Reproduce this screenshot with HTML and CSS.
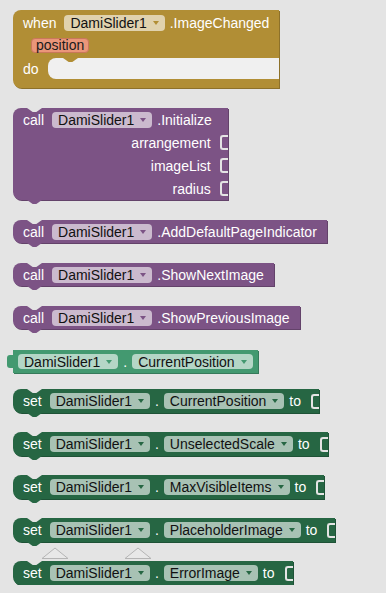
FILE: index.html
```html
<!DOCTYPE html>
<html lang="en">

<head>
  <meta charset="UTF-8">
  <title>DamiSlider blocks</title>
  <link rel="stylesheet" href="styles.css">
</head>

<body>
  <div class="workspace">

    <div class="block event">
      <div class="row top-row">
        <span class="label">when</span>
        <span class="chip">DamiSlider1<i class="arrow"></i></span>
        <span class="label">.ImageChanged</span>
      </div>
      <div class="row param-row">
        <span class="param">position</span>
      </div>
      <div class="row do-row">
        <span class="label do">do</span>
        <span class="slot"></span>
      </div>
    </div>

    <div class="block method stmt init">
      <div class="row head">
        <span class="label">call</span>
        <span class="chip">DamiSlider1<i class="arrow"></i></span>
        <span class="label">.Initialize</span>
      </div>
      <div class="row arg">
        <span class="label">arrangement</span>
        <span class="socket"></span>
      </div>
      <div class="row arg">
        <span class="label">imageList</span>
        <span class="socket"></span>
      </div>
      <div class="row arg">
        <span class="label">radius</span>
        <span class="socket"></span>
      </div>
    </div>

    <div class="block method stmt line">
      <span class="label">call</span>
      <span class="chip">DamiSlider1<i class="arrow"></i></span>
      <span class="label">.AddDefaultPageIndicator</span>
    </div>

    <div class="block method stmt line">
      <span class="label">call</span>
      <span class="chip">DamiSlider1<i class="arrow"></i></span>
      <span class="label">.ShowNextImage</span>
    </div>

    <div class="block method stmt line">
      <span class="label">call</span>
      <span class="chip">DamiSlider1<i class="arrow"></i></span>
      <span class="label">.ShowPreviousImage</span>
    </div>

    <div class="block getter line">
      <span class="chip">DamiSlider1<i class="arrow"></i></span>
      <span class="label dot">.</span>
      <span class="chip">CurrentPosition<i class="arrow"></i></span>
    </div>

    <div class="setters">
      <div class="block setter stmt line">
        <span class="label">set</span>
        <span class="chip">DamiSlider1<i class="arrow"></i></span>
        <span class="label dot">.</span>
        <span class="chip">CurrentPosition<i class="arrow"></i></span>
        <span class="label to">to</span>
        <span class="socket"></span>
      </div>

      <div class="block setter stmt line">
        <span class="label">set</span>
        <span class="chip">DamiSlider1<i class="arrow"></i></span>
        <span class="label dot">.</span>
        <span class="chip">UnselectedScale<i class="arrow"></i></span>
        <span class="label to">to</span>
        <span class="socket"></span>
      </div>

      <div class="block setter stmt line">
        <span class="label">set</span>
        <span class="chip">DamiSlider1<i class="arrow"></i></span>
        <span class="label dot">.</span>
        <span class="chip">MaxVisibleItems<i class="arrow"></i></span>
        <span class="label to">to</span>
        <span class="socket"></span>
      </div>

      <div class="block setter stmt line">
        <span class="label">set</span>
        <span class="chip">DamiSlider1<i class="arrow"></i></span>
        <span class="label dot">.</span>
        <span class="chip">PlaceholderImage<i class="arrow"></i></span>
        <span class="label to">to</span>
        <span class="socket"></span>
        <svg class="tip tip-a" width="28" height="12" viewBox="0 0 28 12"><polygon points="1,11.5 14,1 27,11.5" /></svg>
        <svg class="tip tip-b" width="28" height="12" viewBox="0 0 28 12"><polygon points="1,11.5 14,1 27,11.5" /></svg>
      </div>

      <div class="block setter stmt line">
        <span class="label">set</span>
        <span class="chip">DamiSlider1<i class="arrow"></i></span>
        <span class="label dot">.</span>
        <span class="chip">ErrorImage<i class="arrow"></i></span>
        <span class="label to">to</span>
        <span class="socket"></span>
        <span class="edge edge-a"></span>
        <span class="edge edge-b"></span>
      </div>
    </div>

  </div>
</body>

</html>
```

FILE: styles.css
```css
* {
  box-sizing: border-box;
}

body {
  margin: 0;
  background: #e4e4e4;
  font-family: "Liberation Sans", Arial, sans-serif;
  font-size: 14px;
  line-height: 16px;
}

.workspace {
  display: flex;
  flex-direction: column;
  align-items: flex-start;
  gap: 20px;
  padding: 10px 0 0 13px;
}

/* generic block */

.block {
  position: relative;
  display: flex;
  color: #fff;
  background: var(--c);
  box-shadow: 1px 1px 0 var(--dark);
}

.row {
  display: flex;
  align-items: center;
}

.label {
  white-space: nowrap;
}

.chip {
  display: inline-flex;
  align-items: center;
  gap: 6px;
  height: 16px;
  padding: 0 6px;
  border-radius: 4px;
  background: var(--chip);
  color: #111;
  white-space: nowrap;
}

.arrow {
  width: 0;
  height: 0;
  border-left: 3px solid transparent;
  border-right: 3px solid transparent;
  border-top: 4px solid var(--c);
}

.socket {
  width: 8px;
  height: 15px;
  border: 2px solid #e4e4e4;
  border-right: 0;
  border-radius: 3px 0 0 3px;
}

/* previous / next connection */

.stmt {
  border-radius: 8px 0 0 8px;
}

.stmt::before,
.stmt::after {
  content: "";
  position: absolute;
  left: 14px;
  width: 15px;
  height: 4px;
  clip-path: polygon(0 0, 100% 0, 62% 100%, 38% 100%);
}

.stmt::before {
  top: 0;
  background: #e4e4e4;
}

.stmt::after {
  top: 100%;
  background: var(--c);
}

/* single line blocks */

.line {
  flex-direction: row;
  align-items: center;
  height: 23px;
  padding: 0 10px;
}

.line .chip {
  margin-left: 8px;
}

.line .chip + .label {
  margin-left: 5px;
}

.line .dot + .chip {
  margin-left: 5px;
}

.to {
  margin-left: 9px;
}

.line .socket {
  margin-left: 10px;
  margin-right: -10px;
}

/* event block */

.event {
  --c: #b18e35;
  --chip: #e0d2ae;
  --dark: #8d712a;
  flex-direction: column;
  align-items: stretch;
  padding: 5px 10px 9px;
  border-radius: 8px 0 0 8px;
}

.top-row {
  height: 16px;
  margin-bottom: 7px;
}

.top-row .chip {
  margin: 0 5px 0 8px;
}

.param-row {
  height: 15px;
  margin-bottom: 5px;
}

.param {
  height: 15px;
  margin-left: 8px;
  padding: 0 4px;
  border: 1px solid #c9775b;
  border-radius: 4px;
  background: #ea967a;
  color: #1a1a1a;
  line-height: 13px;
}

.do-row {
  height: 21px;
}

.do {
  width: 25px;
}

.slot {
  position: relative;
  flex: 1;
  align-self: stretch;
  margin-right: -10px;
  border-radius: 8px 0 0 8px;
  background: #f0f0f0;
}

.slot::before {
  content: "";
  position: absolute;
  left: 15px;
  top: 0;
  width: 15px;
  height: 4px;
  background: #b18e35;
  clip-path: polygon(0 0, 100% 0, 62% 100%, 38% 100%);
}

/* method blocks */

.method {
  --c: #7c5385;
  --chip: #cbbace;
  --dark: #63426a;
}

.init {
  flex-direction: column;
  align-items: stretch;
  padding-left: 10px;
}

.init .row {
  height: 23px;
}

.head {
  padding-right: 16px;
}

.head .chip {
  margin: 0 5px 0 8px;
}

.arg {
  justify-content: flex-end;
}

.arg .socket {
  margin-left: 9px;
}

/* component getter / setters */

.getter {
  --c: #439970;
  --chip: #b4d6c6;
  --dark: #367a5a;
  margin-top: 1px;
  padding: 0 5px;
}

.getter .chip {
  height: 15px;
}

.getter .chip:first-child {
  margin-left: 0;
}

.getter::before {
  content: "";
  position: absolute;
  left: -6px;
  top: 5px;
  width: 6px;
  height: 13px;
  border-radius: 3px 0 0 3px;
  background: var(--c);
}

.setters {
  display: flex;
  flex-direction: column;
  align-items: flex-start;
  gap: 19px;
  margin-top: -4px;
}

.setter {
  --c: #266643;
  --chip: #a8c2b4;
  --dark: #1e5236;
  height: 24px;
}

.tip {
  position: absolute;
  top: calc(100% + 5px);
}

.tip polygon {
  fill: #e8e8e8;
  stroke: #b4b4b4;
  stroke-width: 1;
}

.tip-a {
  left: 28px;
}

.tip-b {
  left: 111px;
}

.edge {
  position: absolute;
  top: calc(100% + 7px);
  width: 27px;
  height: 1px;
  background: #b8b8b8;
}

.edge-a {
  left: 29px;
}

.edge-b {
  left: 112px;
}
```
